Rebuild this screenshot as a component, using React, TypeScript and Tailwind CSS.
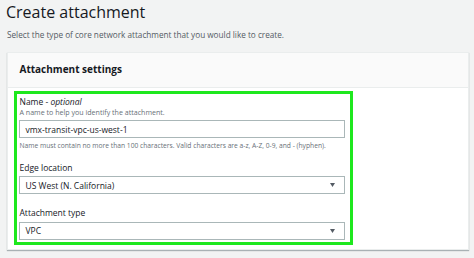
const font = { fontFamily: '"Open Sans", "Liberation Sans", sans-serif' };

function Caret() {
  return (
    <svg width="5" height="4" viewBox="0 0 5 4" className="shrink-0">
      <path d="M0 0h5L2.5 4z" fill="#545b64" />
    </svg>
  );
}

function Field({ children, dropdown }: { children: React.ReactNode; dropdown?: boolean }) {
  return (
    <div className="flex h-[18px] items-center justify-between border border-[#aab7b8] bg-white pl-[6px] pr-[9px] text-[8.5px] leading-[11px] text-[#16191f]">
      <span>{children}</span>
      {dropdown && <Caret />}
    </div>
  );
}

export default function App() {
  return (
    <div className="h-[258px] w-[474px] overflow-hidden bg-[#f2f3f3] pl-[6px]" style={font}>
      <h1 className="pt-[2px] text-[16px] leading-[20px] font-normal text-[#16191f]">Create attachment</h1>
      <p className="mt-[8px] pl-[1px] text-[8.2px] leading-[10px] text-[#545b64]">
        Select the type of core network attachment that you would like to create.
      </p>

      <div className="ml-[0.5px] mt-[12px] w-[462px] border border-[#eaeded] bg-white shadow-[0_1px_1px_rgba(0,28,36,0.3)]">
        <div className="border-b border-[#eaeded] bg-[#fafafa] pl-[12px] pt-[9px] pb-[11px] text-[10px] leading-[14px] font-bold text-[#16191f]">
          Attachment settings
        </div>

        <div className="px-[6px] pt-[3px] pb-[4px]">
          <div className="w-[339px] border-[3px] border-[#1ee81e] pl-[2px] pr-[5px] pt-[1.5px] pb-[2px]">
            <div className="ml-[1px] text-[8.5px] leading-[11px] text-[#16191f]">
              Name - <i>optional</i>
            </div>
            <div className="ml-[1px] mt-[1px] text-[7.1px] leading-[9px] text-[#687078]">
              A name to help you identify the attachment.
            </div>
            <div className="mt-[3.5px]">
              <Field>vmx-transit-vpc-us-west-1</Field>
            </div>
            <div className="ml-[1px] mt-[2.7px] text-[6.7px] leading-[9px] text-[#687078]">
              Name must contain no more than 100 characters. Valid characters are a-z, A-Z, 0-9, and - (hyphen).
            </div>

            <div className="ml-[1px] mt-[12px] text-[8.5px] leading-[11px] text-[#16191f]">Edge location</div>
            <div className="mt-[3.8px]">
              <Field dropdown>US West (N. California)</Field>
            </div>

            <div className="ml-[1px] mt-[12.5px] text-[8.5px] leading-[11px] text-[#16191f]">Attachment type</div>
            <div className="mt-[4px]">
              <Field dropdown>VPC</Field>
            </div>
          </div>
        </div>
      </div>
    </div>
  );
}
